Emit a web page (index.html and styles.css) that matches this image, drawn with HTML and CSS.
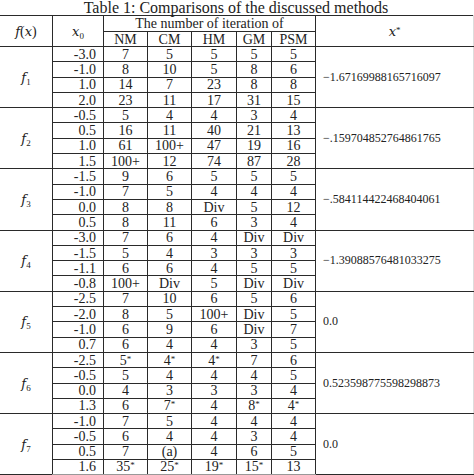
FILE: index.html
```html
<!DOCTYPE html>
<html>
<head>
<meta charset="utf-8">
<link rel="stylesheet" href="styles.css">
</head>
<body>
<div class="title">Table 1: Comparisons of the discussed methods</div>
<table class="tbl">
<colgroup>
<col class="c-f"><col class="c-x"><col class="c-n"><col class="c-n"><col class="c-n2"><col class="c-n3"><col class="c-n"><col class="c-s">
</colgroup>
<thead>
<tr class="h1">
<th rowspan="2" class="fcol"><i>f</i>(<i>x</i>)</th>
<th rowspan="2" class="fcol"><i>x</i><sub>0</sub></th>
<th colspan="5">The number of iteration of</th>
<th rowspan="2" class="fcol"><i>x</i><sup>*</sup></th>
</tr>
<tr class="h2"><th>NM</th><th>CM</th><th>HM</th><th>GM</th><th>PSM</th></tr>
</thead>
<tbody>
<tr><td rowspan="4" class="fn"><i>f</i><sub>1</sub></td><td class="x0">-3.0</td><td>7</td><td>5</td><td>5</td><td>5</td><td>5</td><td rowspan="4" class="xs">−1.67169988165716097</td></tr>
<tr><td class="x0">-1.0</td><td>8</td><td>10</td><td>5</td><td>8</td><td>6</td></tr>
<tr><td class="x0">1.0</td><td>14</td><td>7</td><td>23</td><td>8</td><td>8</td></tr>
<tr><td class="x0">2.0</td><td>23</td><td>11</td><td>17</td><td>31</td><td>15</td></tr>

<tr><td rowspan="4" class="fn"><i>f</i><sub>2</sub></td><td class="x0">-0.5</td><td>5</td><td>4</td><td>4</td><td>3</td><td>4</td><td rowspan="4" class="xs">−.159704852764861765</td></tr>
<tr><td class="x0">0.5</td><td>16</td><td>11</td><td>40</td><td>21</td><td>13</td></tr>
<tr><td class="x0">1.0</td><td>61</td><td>100+</td><td>47</td><td>19</td><td>16</td></tr>
<tr><td class="x0">1.5</td><td>100+</td><td>12</td><td>74</td><td>87</td><td>28</td></tr>

<tr><td rowspan="4" class="fn"><i>f</i><sub>3</sub></td><td class="x0">-1.5</td><td>9</td><td>6</td><td>5</td><td>5</td><td>5</td><td rowspan="4" class="xs">−.584114422468404061</td></tr>
<tr><td class="x0">-1.0</td><td>7</td><td>5</td><td>4</td><td>4</td><td>4</td></tr>
<tr><td class="x0">0.0</td><td>8</td><td>8</td><td>Div</td><td>5</td><td>12</td></tr>
<tr><td class="x0">0.5</td><td>8</td><td>11</td><td>6</td><td>3</td><td>4</td></tr>

<tr><td rowspan="4" class="fn"><i>f</i><sub>4</sub></td><td class="x0">-3.0</td><td>7</td><td>6</td><td>4</td><td>Div</td><td>Div</td><td rowspan="4" class="xs">−1.39088576481033275</td></tr>
<tr><td class="x0">-1.5</td><td>5</td><td>4</td><td>3</td><td>3</td><td>3</td></tr>
<tr><td class="x0">-1.1</td><td>6</td><td>6</td><td>4</td><td>5</td><td>5</td></tr>
<tr><td class="x0">-0.8</td><td>100+</td><td>Div</td><td>5</td><td>Div</td><td>Div</td></tr>

<tr><td rowspan="4" class="fn"><i>f</i><sub>5</sub></td><td class="x0">-2.5</td><td>7</td><td>10</td><td>6</td><td>5</td><td>6</td><td rowspan="4" class="xs">0.0</td></tr>
<tr><td class="x0">-2.0</td><td>8</td><td>5</td><td>100+</td><td>Div</td><td>5</td></tr>
<tr><td class="x0">-1.0</td><td>6</td><td>9</td><td>6</td><td>Div</td><td>7</td></tr>
<tr><td class="x0">0.7</td><td>6</td><td>4</td><td>4</td><td>3</td><td>5</td></tr>

<tr><td rowspan="4" class="fn"><i>f</i><sub>6</sub></td><td class="x0">-2.5</td><td>5<sup>*</sup></td><td>4<sup>*</sup></td><td>4<sup>*</sup></td><td>7</td><td>6</td><td rowspan="4" class="xs">0.523598775598298873</td></tr>
<tr><td class="x0">-0.5</td><td>5</td><td>4</td><td>4</td><td>4</td><td>5</td></tr>
<tr><td class="x0">0.0</td><td>4</td><td>3</td><td>3</td><td>3</td><td>4</td></tr>
<tr><td class="x0">1.3</td><td>6</td><td>7<sup>*</sup></td><td>4</td><td>8<sup>*</sup></td><td>4<sup>*</sup></td></tr>

<tr><td rowspan="4" class="fn"><i>f</i><sub>7</sub></td><td class="x0">-1.0</td><td>7</td><td>5</td><td>4</td><td>4</td><td>4</td><td rowspan="4" class="xs">0.0</td></tr>
<tr><td class="x0">-0.5</td><td>6</td><td>4</td><td>4</td><td>3</td><td>4</td></tr>
<tr><td class="x0">0.5</td><td>7</td><td>(a)</td><td>4</td><td>6</td><td>5</td></tr>
<tr class="last"><td class="x0">1.6</td><td>35<sup>*</sup></td><td>25<sup>*</sup></td><td>19<sup>*</sup></td><td>15<sup>*</sup></td><td>13</td></tr>
</tbody>
</table>
</body>
</html>
```
FILE: styles.css
```css
html, body {
  margin: 0;
  padding: 0;
  background: #fff;
  overflow: hidden;
}
body {
  font-family: "Liberation Serif", "Times New Roman", serif;
  color: #222;
  width: 474px;
  height: 475px;
}
.title {
  height: 15px;
  line-height: 15px;
  font-size: 16px;
  text-align: center;
  margin-left: -2px;
  white-space: nowrap;
}
.tbl {
  border-collapse: collapse;
  table-layout: fixed;
  width: 474px;
  margin-left: -1px;
  font-size: 14px;
}
.c-f { width: 53px; }
.c-x { width: 51px; }
.c-n { width: 44px; }
.c-n2 { width: 45px; }
.c-n3 { width: 35px; }
.c-s { width: 158px; }
.tbl th, .tbl td {
  border: 1px solid #2a2a2a;
  padding: 0;
  text-align: center;
  font-weight: normal;
  line-height: 13px;
  white-space: nowrap;
  overflow: hidden;
}
.tbl th:last-child, .tbl td.xs { border-right-color: #ddd; }
.h1 { height: 16px; }
.h2 { height: 15px; }
tbody tr { height: 15.3px; }
.tbl .x0 {
  text-align: right;
  padding-right: 7px;
}
.tbl .xs {
  text-align: left;
  padding-left: 7px;
  font-size: 12px;
}
.fn, .fcol { font-size: 14px; }
.tbl i {
  font-family: "DejaVu Serif", "Liberation Serif", serif;
  font-style: italic;
  font-size: 13px;
}
sub {
  font-size: 9px;
  vertical-align: -3px;
  line-height: 0;
}
sup {
  font-size: 9px;
  vertical-align: 3px;
  line-height: 0;
}
.tbl tr.last td { border-bottom: 2px solid #999; }
```
